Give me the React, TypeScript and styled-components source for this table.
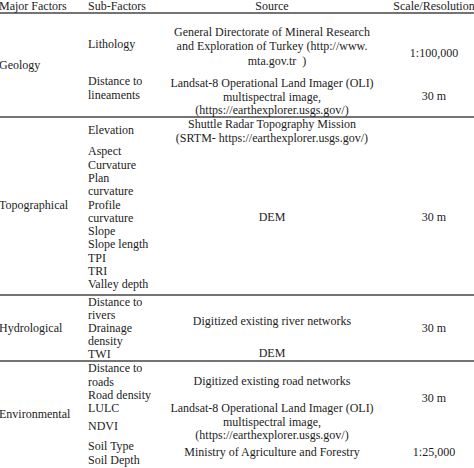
import * as React from "react";
import styled, { createGlobalStyle } from "styled-components";

const GlobalStyle = createGlobalStyle`
    html, body {
        margin: 0;
        padding: 0;
        background: #ffffff;
    }
    body {
        font-family: "Liberation Serif", "Times New Roman", serif;
    }
`;

interface Entree {
    texte: string;
    // space above the line, from the end of the previous one
    ecart?: number;
    interligne?: number;
    retrait?: number;
}

interface Groupe {
    facteur: string;
    hauteur: number;
    filet: boolean;
    sousFacteurs: Entree[];
    sources: Entree[];
    echelles: Entree[];
}

const suite = (textes: string[], ecart = 0, interligne?: number): Entree[] =>
    textes.map((texte, i) => ({ texte, ecart: i === 0 ? ecart : 0, interligne }));

const GROUPES: Groupe[] = [
    {
        facteur: "Geology",
        hauteur: 102,
        filet: true,
        sousFacteurs: [
            { texte: "Lithology", ecart: 24.35 },
            ...suite(["Distance to", "lineaments"], 23.7),
        ],
        sources: [
            ...suite(["General Directorate of Mineral Research", "and Exploration of Turkey (http://www."], 10.75, 14.5),
            { texte: "mta.gov.tr\u00a0\u00a0)", interligne: 14.5, retrait: 10 },
            ...suite(["Landsat-8 Operational Land Imager (OLI)", "multispectral image,", "(https://earthexplorer.usgs.gov/)"], 9.1),
        ],
        echelles: [
            { texte: "1:100,000", ecart: 33.35 },
            { texte: "30 m", ecart: 29.7 },
        ],
    },
    {
        facteur: "Topographical",
        hauteur: 176,
        filet: true,
        sousFacteurs: [
            { texte: "Elevation", ecart: 6.35 },
            ...suite(["Aspect", "Curvature", "Plan", "curvature", "Profile", "curvature", "Slope", "Slope length", "TPI", "TRI", "Valley depth"], 7.7),
        ],
        sources: [
            ...suite(["Shuttle Radar Topography Mission", "(SRTM- https://earthexplorer.usgs.gov/)"], 0.35),
            { texte: "DEM", ecart: 66.4 },
        ],
        echelles: [{ texte: "30 m", ecart: 93.35 }],
    },
    {
        facteur: "Hydrological",
        hauteur: 64,
        filet: true,
        sousFacteurs: suite(["Distance to", "rivers", "Drainage", "density", "TWI"], -0.5, 13),
        sources: [
            { texte: "Digitized existing river networks", ecart: 19.35 },
            { texte: "DEM", ecart: 18.7 },
        ],
        echelles: [{ texte: "30 m", ecart: 26.35 }],
    },
    {
        facteur: "Environmental",
        hauteur: 98,
        filet: false,
        sousFacteurs: [
            ...suite(["Distance to", "roads", "Road density", "LULC"], 0.35),
            { texte: "NDVI", ecart: 4.8 },
            ...suite(["Soil Type", "Soil Depth"], 6.7),
        ],
        sources: [
            { texte: "Digitized existing road networks", ecart: 13.35 },
            ...suite(["Landsat-8 Operational Land Imager (OLI)", "multispectral image,", "(https://earthexplorer.usgs.gov/)"], 13.7),
            { texte: "Ministry of Agriculture and Forestry", ecart: 4.1 },
        ],
        echelles: [
            { texte: "30 m", ecart: 30.35 },
            { texte: "1:25,000", ecart: 40.7 },
        ],
    },
];

const Page = styled.div`
    width: 474px;
    height: 468px;
    overflow: hidden;
    background: #ffffff;
    color: #1c1c1c;
`;

const Tableau = styled.div`
    width: 485px;
    margin-left: -1px;
    font-size: 12px;
`;

const Rangee = styled.div<{ $hauteur: number; $filet: boolean }>`
    display: grid;
    grid-template-columns: 89px 72px 224px 100px;
    height: ${props => props.$hauteur}px;
    border-bottom: ${props => props.$filet ? "2px solid #747474" : "none"};
`;

const Entete = styled.div<{ $centre?: boolean }>`
    line-height: 12px;
    white-space: nowrap;
    text-align: ${props => props.$centre ? "center" : "left"};
`;

const Facteur = styled.div`
    display: flex;
    align-items: center;
    line-height: 13.3px;
    white-space: nowrap;
`;

const Colonne = styled.div<{ $centre?: boolean }>`
    display: flex;
    flex-direction: column;
    align-items: ${props => props.$centre ? "center" : "flex-start"};
    white-space: nowrap;
`;

const Ligne = styled.div<{ $ecart: number; $interligne: number; $retrait: number }>`
    flex: none;
    margin-top: ${props => props.$ecart}px;
    height: ${props => props.$interligne}px;
    line-height: ${props => props.$interligne}px;
    padding-left: ${props => props.$retrait}px;
`;

const Lignes = ({ entrees, centre }: { entrees: Entree[]; centre?: boolean }) => (
    <Colonne $centre={centre}>
        {entrees.map((e, i) =>
            <Ligne key={i}
                $ecart={e.ecart ?? 0}
                $interligne={e.interligne ?? 13.3}
                $retrait={e.retrait ?? 0}>
                {e.texte}
            </Ligne>
        )}
    </Colonne>
);

export default function App() {
    return (
        <Page>
            <GlobalStyle />
            <Tableau>
                <Rangee $hauteur={12} $filet={true}>
                    <Entete>Major Factors</Entete>
                    <Entete>Sub-Factors</Entete>
                    <Entete $centre>Source</Entete>
                    <Entete $centre>Scale/Resolution</Entete>
                </Rangee>
                {GROUPES.map(g =>
                    <Rangee key={g.facteur} $hauteur={g.hauteur} $filet={g.filet}>
                        <Facteur>{g.facteur}</Facteur>
                        <Lignes entrees={g.sousFacteurs} />
                        <Lignes entrees={g.sources} centre />
                        <Lignes entrees={g.echelles} centre />
                    </Rangee>
                )}
            </Tableau>
        </Page>
    );
}
